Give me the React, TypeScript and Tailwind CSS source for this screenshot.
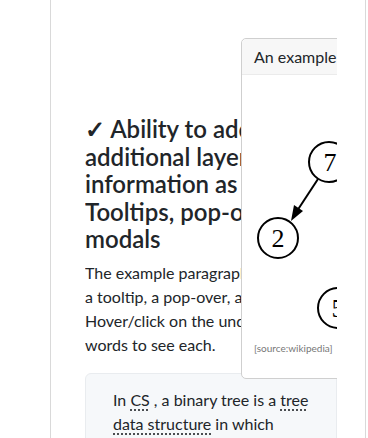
import React from 'react';

const font = { fontFamily: 'Lato, "Liberation Sans", sans-serif' };

const TreeImage = () => (
  <svg width="220" height="258" viewBox="0 0 220 258" className="block">
    <g fill="white" stroke="black" strokeWidth="2">
      <circle cx="75" cy="79" r="20" />
      <circle cx="24" cy="155" r="20" />
      <circle cx="84" cy="225" r="20" />
    </g>
    <line x1="64" y1="96" x2="43" y2="128" stroke="black" strokeWidth="2" />
    <polygon points="37,138 40,122 49,128" fill="black" />
    <g fontFamily='"Liberation Serif", serif' fontSize="26" textAnchor="middle" fill="black">
      <text x="76" y="88">7</text>
      <text x="24" y="164">2</text>
      <text x="84" y="234">5</text>
    </g>
  </svg>
);

export default function App() {
  return (
    <div className="bg-white w-[368px] h-[438px] overflow-hidden text-[#212529]" style={font}>
      <div className="ml-[50px] w-[316px] h-[438px] border-x border-[#d9d9d9] pl-[34px] pr-[28px]">
        <div className="relative h-full overflow-hidden pt-[115px]">
          <h4 className="text-[24px] leading-[27.6px] font-semibold mb-2 whitespace-nowrap">
            ✓ Ability to add an<br />
            additional layer of<br />
            information as<br />
            Tooltips, pop-overs and<br />
            modals
          </h4>
          <p className="text-[16px] leading-6 mb-4 whitespace-nowrap">
            The example paragraph below shows<br />
            a tooltip, a pop-over, and a modal.<br />
            Hover/click on the underlined<br />
            words to see each.
          </p>
          <blockquote className="bg-[#f6f8fa] border border-[#e9ecef] rounded-md pl-[27px] pt-[14px] pb-4 text-[16px] leading-6 whitespace-nowrap">
            In <span className="underline decoration-dotted underline-offset-4">CS</span> , a binary tree is a{' '}
            <span className="underline decoration-dotted underline-offset-4">tree</span>
            <br />
            <span className="underline decoration-dotted underline-offset-4">data structure</span> in which
            <br />
            each node has at most two
          </blockquote>

          <div className="absolute left-[156px] top-[38px] w-[260px] h-[341px] bg-white border border-[#cfcfcf] rounded-[5px]">
            <div className="h-[36px] bg-[#f7f7f7] border-b border-[#ebebeb] rounded-t-[5px] px-3 flex items-center text-[16px] whitespace-nowrap">
              An example popover
            </div>
            <div className="pl-3 pt-2">
              <TreeImage />
              <div className="text-[10px] leading-4 text-[#777] -mt-[1px] whitespace-nowrap">[source:wikipedia]</div>
            </div>
          </div>
        </div>
      </div>
    </div>
  );
}
